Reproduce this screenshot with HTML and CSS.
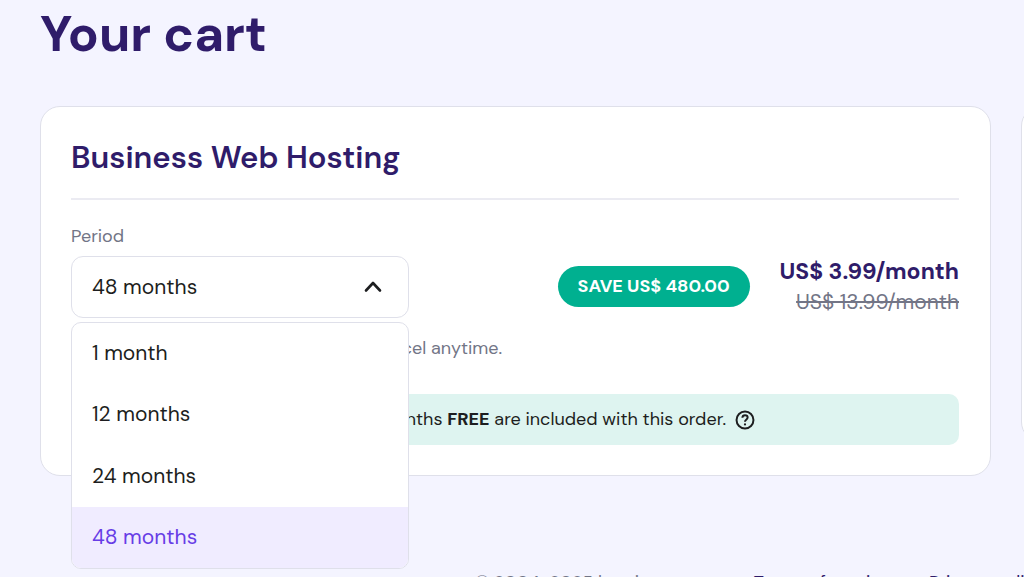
FILE: index.html
```html
<!DOCTYPE html>
<html lang="en">
<head>
<meta charset="utf-8">
<meta name="viewport" content="width=device-width, initial-scale=1">
<title>Your cart</title>
<link rel="stylesheet" href="styles.css">
</head>
<body>
<main class="page">
  <h1 class="page-title">Your cart</h1>
  <div class="columns">
    <section class="card">
      <h2 class="card-title">Business Web Hosting</h2>
      <div class="plan">
        <div class="period">
          <label class="period-label" for="period">Period</label>
          <div class="period-control">
            <select class="period-select" id="period">
              <option>1 month</option>
              <option>12 months</option>
              <option>24 months</option>
              <option selected>48 months</option>
            </select>
            <svg class="chevron" viewBox="0 0 24 24" aria-hidden="true"><path d="M5 15.500 L12 8 L19 15.500"/></svg>
            <ul class="menu" role="listbox" aria-label="Period">
              <li class="menu-item" role="option">1 month</li>
              <li class="menu-item" role="option">12 months</li>
              <li class="menu-item" role="option">24 months</li>
              <li class="menu-item menu-item-selected" role="option" aria-selected="true">48 months</li>
            </ul>
          </div>
        </div>
        <div class="offer">
          <span class="badge">SAVE US$ 480.00</span>
          <div class="prices">
            <strong class="price">US$ 3.99/month</strong>
            <s class="old-price">US$ 13.99/month</s>
          </div>
        </div>
      </div>
      <p class="note">Renews at US$ 8.99/mo for 4 years. Cancel anytime.</p>
      <div class="banner">
        <p class="banner-text">Great news! Your FREE domain + 3 months <b>FREE</b> are included with this order.</p>
        <button class="help" type="button" aria-label="More information">
          <svg class="help-icon" viewBox="0 0 20 20" aria-hidden="true"><circle cx="10" cy="10" r="7.700"/><path d="M7.600 8 C7.700 6.500 8.700 5.700 10 5.700 C11.400 5.700 12.400 6.600 12.400 7.800 C12.400 9.500 10 9.500 10 11.700"/><circle class="dot" cx="10" cy="14" r="1"/></svg>
        </button>
      </div>
    </section>
    <aside class="summary"></aside>
  </div>
  <footer class="footer">
    <span class="copyright">© 2004-2025 hostinger.com</span>
    <a class="footer-link" href="#">Terms of service</a>
    <a class="footer-link" href="#">Privacy policy</a>
  </footer>
</main>
</body>
</html>
```
FILE: styles.css
```css
* {
  box-sizing: border-box;
}

body {
  margin: 0;
  height: 100vh;
  overflow: hidden;
  background: #f4f4ff;
  color: #1d1e20;
  font-family: "DM Sans", Inter, sans-serif;
  font-size: 18px;
  line-height: 24px;
}

h1, h2, p, ul {
  margin: 0;
  padding: 0;
}

.page {
  padding: 4px 0 0 40px;
}

.page-title {
  color: #2f1c6a;
  font-size: 51px;
  line-height: 60px;
  font-weight: 700;
}

.columns {
  display: flex;
  align-items: flex-start;
  gap: 30px;
  margin-top: 42px;
}

.card,
.summary {
  border: 1px solid #dfe0ea;
  border-radius: 20px;
  background: #fff;
}

.card {
  flex: 1;
  min-width: 0;
  padding: 30px 31px 30px 30px;
}

.summary {
  flex: 0 0 360px;
  margin-right: -357px;
  min-height: 336px;
}

.card-title {
  padding-bottom: 20px;
  border-bottom: 2px solid #ebebf2;
  color: #2f1c6a;
  font-size: 31px;
  line-height: 41px;
  font-weight: 600;
}

.plan {
  display: flex;
  justify-content: space-between;
  margin-top: 24px;
}

.period {
  flex: 0 1 338px;
}

.period-label {
  display: block;
  margin-bottom: 8px;
  color: #727586;
}

.period-control {
  position: relative;
}

.period-select {
  display: block;
  width: 100%;
  height: 62px;
  padding: 0 20px;
  border: 1px solid #dfe0ea;
  border-radius: 12px;
  background: #fff;
  color: #1d1e20;
  font: inherit;
  font-size: 21px;
  line-height: 26px;
  appearance: none;
}

.chevron {
  position: absolute;
  top: 19px;
  right: 24px;
  width: 24px;
  height: 24px;
  fill: none;
  stroke: #1d1e20;
  stroke-width: 2.600;
  stroke-linecap: round;
  stroke-linejoin: round;
  pointer-events: none;
}

.menu {
  display: grid;
  grid-auto-rows: 1fr;
  position: absolute;
  z-index: 1;
  top: 66px;
  left: 0;
  right: 0;
  height: 247px;
  overflow: hidden;
  border: 1px solid #dfe0ea;
  border-radius: 10px;
  background: #fff;
  list-style: none;
  font-size: 21px;
}

.menu-item {
  padding: 0 20px;
  line-height: 61px;
}

.menu-item-selected {
  background: #f0ecff;
  color: #673de6;
}

.offer {
  display: flex;
  align-items: center;
  align-self: flex-end;
  gap: 30px;
  height: 64px;
}

.badge {
  padding: 8px 20px;
  border-radius: 21px;
  background: #00b090;
  color: #fff;
  line-height: 25px;
  font-weight: 700;
}

.prices {
  display: flex;
  flex-direction: column;
  align-items: flex-end;
}

.price {
  color: #2f1c6a;
  font-size: 23px;
  line-height: 32px;
}

.old-price {
  color: #727586;
  font-size: 21px;
  line-height: 30px;
}

.note {
  margin-top: 18px;
  color: #727586;
}

.banner {
  display: flex;
  align-items: center;
  gap: 8px;
  margin-top: 34px;
  padding: 13px 20px;
  border-radius: 10px;
  background: #def4f0;
}

.banner-text {
  line-height: 25px;
  white-space: nowrap;
}

.help {
  display: flex;
  padding: 0;
  border: 0;
  background: none;
}

.help-icon {
  width: 22px;
  height: 22px;
  fill: none;
  stroke: #1d1e20;
  stroke-width: 1.800;
}

.dot {
  fill: #1d1e20;
  stroke: none;
}

.footer {
  display: flex;
  gap: 38px;
  margin-top: 94px;
  padding-left: 435px;
  white-space: nowrap;
}

.copyright {
  color: #727586;
}

.footer-link {
  color: #2f1c6a;
  text-decoration: none;
}
```
